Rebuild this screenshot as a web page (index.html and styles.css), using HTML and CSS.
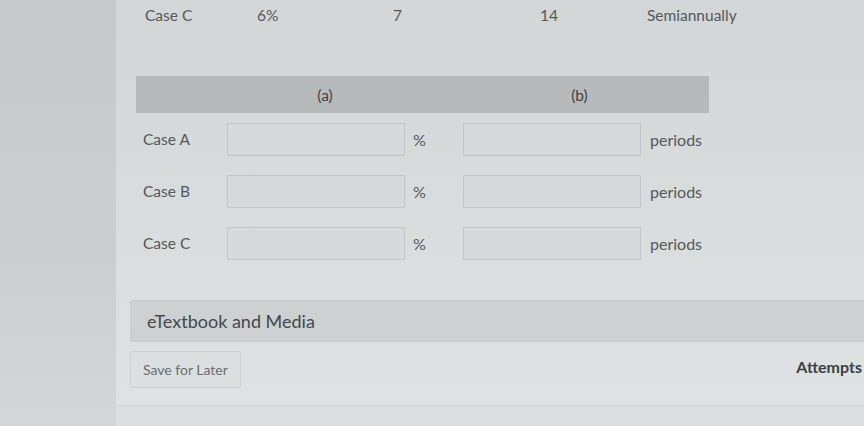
FILE: index.html
```html
<!DOCTYPE html>
<html lang="en">
<head>
<meta charset="utf-8">
<title>Case table</title>
<link rel="stylesheet" href="styles.css">
</head>
<body>
<div class="page">
  <aside class="gutter"></aside>
  <div class="column">
    <main class="panel">
      <div class="data-row">
        <span class="c1">Case C</span>
        <span class="c2">6%</span>
        <span class="c3">7</span>
        <span class="c4">14</span>
        <span class="c5">Semiannually</span>
      </div>

      <div class="answers">
        <div class="head">
          <div class="h-blank"></div>
          <div class="h-a">(a)</div>
          <div class="h-b">(b)</div>
        </div>
        <div class="row">
          <span class="label">Case A</span>
          <span class="field"><input class="box" type="text"><span class="unit pct">%</span></span>
          <span class="field"><input class="box" type="text"><span class="unit">periods</span></span>
        </div>
        <div class="row">
          <span class="label">Case B</span>
          <span class="field"><input class="box" type="text"><span class="unit pct">%</span></span>
          <span class="field"><input class="box" type="text"><span class="unit">periods</span></span>
        </div>
        <div class="row">
          <span class="label">Case C</span>
          <span class="field"><input class="box" type="text"><span class="unit pct">%</span></span>
          <span class="field"><input class="box" type="text"><span class="unit">periods</span></span>
        </div>
      </div>

      <div class="media-bar">eTextbook and Media</div>

      <div class="actions">
        <button class="save" type="button">Save for Later</button>
        <span class="attempts">Attempts</span>
      </div>
    </main>
    <div class="bottom"></div>
  </div>
</div>
</body>
</html>
```

FILE: styles.css
```css
* { box-sizing: border-box; }
html, body {
  margin: 0;
  padding: 0;
  width: 864px;
  height: 426px;
  overflow: hidden;
  background: #d9dddd;
  font-family: "Lato", "Liberation Sans", sans-serif;
}
.page {
  display: flex;
  height: 426px;
}
.gutter {
  width: 116px;
  flex: none;
  background: linear-gradient(180deg, #c6cacb 0%, #cacecf 60%, #d3d7d7 100%);
}
.column {
  flex: 1;
  display: flex;
  flex-direction: column;
}
.panel {
  height: 405px;
  padding-left: 14px;
  background: linear-gradient(180deg, #d2d6d7 0%, #d8dcdc 50%, #dee2e2 100%);
  color: #55595b;
}
.data-row {
  display: grid;
  grid-template-columns: 112px 136px 147px 107px auto;
  padding-left: 15px;
  height: 30px;
  align-items: center;
  font-size: 15.5px;
  color: #53585a;
}
.answers {
  margin-top: 46px;
  margin-left: 6px;
  width: 573px;
}
.head {
  display: grid;
  grid-template-columns: 84px 210px 279px;
  height: 37px;
  align-items: center;
  background: #b6babb;
  font-size: 15.5px;
  color: #3e4345;
}
.h-a, .h-b { text-align: center; }
.h-b { padding-left: 20px; }
.row {
  display: grid;
  grid-template-columns: 91px 236px auto;
  align-items: center;
  height: 52px;
}
.label {
  padding-left: 7px;
  font-size: 15.5px;
  color: #53585a;
}
.field {
  display: flex;
  align-items: center;
}
.box {
  width: 178px;
  height: 33px;
  margin: 0;
  border: 1px solid #c1c5c6;
  background: #d6dadb;
  border-radius: 1px;
}
.unit {
  margin-left: 9px;
  font-size: 16px;
  color: #53585a;
}
.pct { margin-left: 8px; }
.media-bar {
  margin-top: 31px;
  height: 42px;
  display: flex;
  align-items: center;
  padding-left: 16px;
  background: #cdd1d2;
  border-top: 1px solid #c4c8c9;
  border-bottom: 1px solid #c4c8c9;
  border-left: 1px solid #c8cccd;
  border-radius: 3px 0 0 3px;
  font-size: 18px;
  color: #45494b;
}
.actions {
  margin-top: 9px;
  display: flex;
  justify-content: space-between;
  align-items: flex-start;
}
.save {
  width: 111px;
  height: 37px;
  padding: 0 0 0 12px;
  text-align: left;
  background: #dcdfe0;
  border: 1px solid #cdd1d2;
  border-radius: 2px;
  font-family: "Lato", "Liberation Sans", sans-serif;
  font-size: 14px;
  color: #6a6e70;
}
.attempts {
  margin-top: 6px;
  margin-right: 2px;
  font-size: 16px;
  font-weight: 700;
  color: #3b4042;
}
.bottom {
  flex: 1;
  background: #dbdfdf;
  border-top: 1px solid #d2d6d6;
}
```
